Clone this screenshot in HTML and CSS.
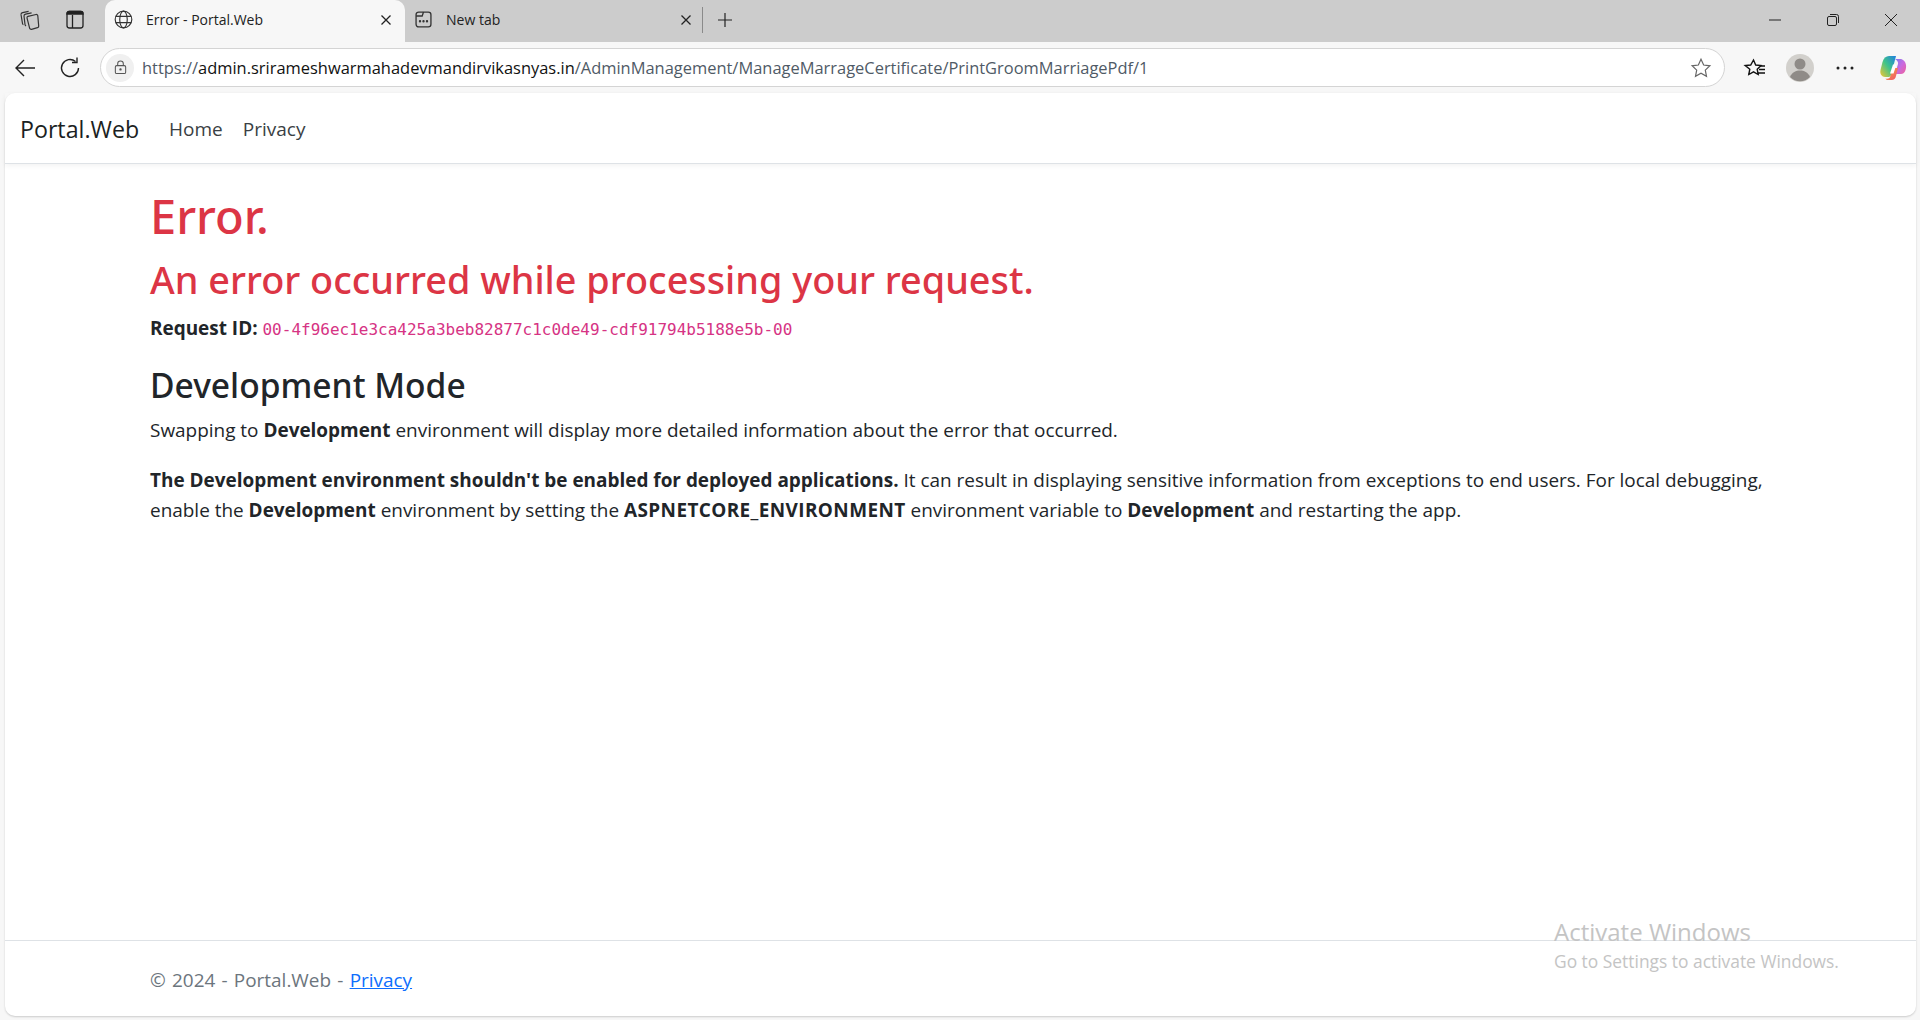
FILE: index.html
```html
<!DOCTYPE html>
<html lang="en">
<head>
<meta charset="utf-8">
<title>Error - Portal.Web</title>
<link rel="stylesheet" href="styles.css">
</head>
<body>
<div class="tabbar">
  <div class="tab-tools">
    <svg class="ic" viewBox="0 0 24 24" fill="none" stroke="#333" stroke-width="1.2"><path d="M3 6.5c0-1 .7-1.7 1.6-1.9l6-1.2M6 8c0-1 .7-1.7 1.6-1.9l6-1.2"/><path d="M3 6.5l1.5 9c.1.6.4 1 .9 1.2M6 8l1 8.5c.1.7.5 1.2 1.1 1.4"/><path d="M10 8.3l8-1.8c.9-.2 1.700.4 1.800 1.300l.9 10.200c.1.800-.4 1.500-1.200 1.700l-6 1.600c-.9.2-1.700-.3-1.900-1.200L9 10c-.1-.8.3-1.500 1-1.700z"/></svg>
    <svg class="ic" viewBox="0 0 24 24" fill="none" stroke="#222" stroke-width="1.3"><rect x="4" y="3.500" width="16" height="16.500" rx="2.500"/><path d="M4 6h16V5.500a2 2 0 0 0-2-2H6a2 2 0 0 0-2 2z" fill="#222"/><path d="M9.500 7v13"/></svg>
  </div>
  <div class="tab tab-active">
    <svg class="fav" viewBox="0 0 24 24" fill="none" stroke="#333" stroke-width="1.300"><circle cx="12" cy="12" r="9.500"/><ellipse cx="12" cy="12" rx="4.300" ry="9.500"/><path d="M3.200 8.500h17.600M3.200 15.500h17.600"/></svg>
    <span class="tab-title">Error - Portal.Web</span>
    <svg class="close" viewBox="0 0 12 12" fill="none" stroke="#222" stroke-width="1.300"><path d="M1.500 1.500l9 9M10.500 1.500l-9 9"/></svg>
  </div>
  <div class="tab">
    <svg class="fav" viewBox="0 0 24 24" fill="none" stroke="#333" stroke-width="1.500"><rect x="3.500" y="3.500" width="17" height="17" rx="3"/><path d="M3.500 8h7l1.500-4.500"/><circle cx="8" cy="14" r=".6" fill="#333"/><circle cx="12" cy="14" r=".6" fill="#333"/><circle cx="16" cy="14" r=".6" fill="#333"/></svg>
    <span class="tab-title">New tab</span>
    <svg class="close" viewBox="0 0 12 12" fill="none" stroke="#222" stroke-width="1.300"><path d="M1.500 1.500l9 9M10.500 1.500l-9 9"/></svg>
  </div>
  <span class="tab-sep"></span>
  <svg class="plus" viewBox="0 0 16 16" fill="none" stroke="#222" stroke-width="1.200"><path d="M8 1v14M1 8h14"/></svg>
  <div class="window-controls">
    <svg class="win" viewBox="0 0 14 14" fill="none" stroke="#222" stroke-width="1"><path d="M1 7h12"/></svg>
    <svg class="win" viewBox="0 0 14 14" fill="none" stroke="#222" stroke-width="1"><rect x="1.500" y="3.500" width="9" height="9" rx="1.500"/><path d="M4 1.500h6.500a2 2 0 0 1 2 2V10"/></svg>
    <svg class="win" viewBox="0 0 14 14" fill="none" stroke="#222" stroke-width="1"><path d="M1 1l12 12M13 1L1 13"/></svg>
  </div>
</div>
<div class="toolbar">
  <svg class="nav-ic" viewBox="0 0 24 24" fill="none" stroke="#222" stroke-width="1.400"><path d="M22 12H3M11 4l-8 8 8 8"/></svg>
  <svg class="nav-ic" viewBox="0 0 24 24" fill="none" stroke="#222" stroke-width="1.400"><path d="M20.500 12a8.500 8.500 0 1 1-3-6.500"/><path d="M19 1.500v5h-5"/></svg>
  <div class="addr">
    <span class="lock"><svg viewBox="0 0 16 16" fill="none" stroke="#555" stroke-width="1.100"><rect x="2.500" y="6" width="11" height="8.500" rx="1.500"/><path d="M5 6V4a3 3 0 0 1 6 0v2"/><circle cx="8" cy="10" r=".7" fill="#555"/></svg></span>
    <span class="url"><span class="url-dim">https://</span>admin.srirameshwarmahadevmandirvikasnyas.in<span class="url-dim">/AdminManagement/ManageMarrageCertificate/PrintGroomMarriagePdf/1</span></span>
    <svg class="star" viewBox="0 0 24 24" fill="none" stroke="#666" stroke-width="1.300"><path d="M12 2.500l2.900 6.300 6.800.8-5 4.700 1.300 6.800-6-3.400-6 3.400 1.300-6.800-5-4.700 6.800-.8z"/></svg>
  </div>
  <div class="tools">
    <svg class="tool" viewBox="0 0 24 24" fill="none" stroke="#111" stroke-width="1.400"><path d="M9.500 3l2.200 5 5.300.6-3.800 3.600 1 5.300-4.700-2.700-4.700 2.700 1-5.300L1.200 8.600 6.700 8z" transform="translate(1 1)"/><path d="M17 10h5M16 13.500h6M15 17h7"/></svg>
    <svg class="avatar" viewBox="0 0 28 28"><circle cx="14" cy="14" r="14" fill="#d2d0cc"/><circle cx="14" cy="10" r="5.500" fill="#8f8b87"/><path d="M4 23c2-5 6-6.500 10-6.500S22 18 24 23a14 14 0 0 1-20 0z" fill="#8f8b87"/></svg>
    <svg class="tool dots" viewBox="0 0 24 24" fill="#222"><circle cx="5" cy="12" r="1.500"/><circle cx="12" cy="12" r="1.500"/><circle cx="19" cy="12" r="1.500"/></svg>
    <svg class="copilot" viewBox="0 0 28 28" fill="none">
      <defs>
        <linearGradient id="cpa" x1="0" y1="1" x2="1" y2="0"><stop offset="0" stop-color="#f5c530"/><stop offset=".5" stop-color="#3fc48a"/><stop offset="1" stop-color="#1f7fe0"/></linearGradient>
        <linearGradient id="cpb" x1="0" y1="0" x2="1" y2="1"><stop offset="0" stop-color="#7c7cf0"/><stop offset=".5" stop-color="#c86be0"/><stop offset="1" stop-color="#f0609a"/></linearGradient>
        <linearGradient id="cpc" x1="0" y1="0" x2="1" y2="1"><stop offset="0" stop-color="#f5b040"/><stop offset="1" stop-color="#f0506a"/></linearGradient>
      </defs>
      <path d="M10 2h7l-5 19c-.4 1.500-1.500 2-3 2H6c-3 0-5.500-3-4.500-7l2-8C4.500 4 7 2 10 2z" fill="url(#cpa)"/>
      <path d="M16 5h5c3 0 5.500 2.500 6 6 .5 4-1 9-5 9h-6l3-10c.3-1 .2-3-3-5z" fill="url(#cpb)"/>
      <path d="M11 23l3-9h5l-2 8c-.5 2.500-2 4-4.500 4H9c-1 0-2-.5-2.500-1.500C9 25 10.500 24.500 11 23z" fill="url(#cpc)"/>
      <path d="M14 10.500h3.500l-3 9H11z" fill="#fff"/>
    </svg>
  </div>
</div>
<div class="page">
  <header class="navbar">
    <a class="brand">Portal.Web</a>
    <nav class="nav"><a>Home</a><a>Privacy</a></nav>
  </header>
  <main class="container">
    <h1 class="danger">Error.</h1>
    <h2 class="danger">An error occurred while processing your request.</h2>
    <p class="req"><strong>Request ID:</strong> <code>00-4f96ec1e3ca425a3beb82877c1c0de49-cdf91794b5188e5b-00</code></p>
    <h3>Development Mode</h3>
    <p>Swapping to <strong>Development</strong> environment will display more detailed information about the error that occurred.</p>
    <p><strong>The Development environment shouldn't be enabled for deployed applications.</strong> It can result in displaying sensitive information from exceptions to end users. For local debugging, enable the <strong>Development</strong> environment by setting the <strong class="caps">ASPNETCORE_ENVIRONMENT</strong> environment variable to <strong>Development</strong> and restarting the app.</p>
  </main>
  <footer class="footer">© 2024 - Portal.Web - <a href="#">Privacy</a></footer>
  <div class="activate">
    <div class="act-1">Activate Windows</div>
    <div class="act-2">Go to Settings to activate Windows.</div>
  </div>
</div>
</body>
</html>
```
FILE: styles.css
```css
* { box-sizing: border-box; }
html, body { height: 100%; }
body {
  margin: 0;
  height: 1020px;
  overflow: hidden;
  display: flex;
  flex-direction: column;
  background: #f7f7f7;
  font-family: "Open Sans", "Noto Sans", sans-serif;
  color: #212529;
}
.tabbar {
  height: 42px;
  flex: none;
  background: #cccccc;
  display: flex;
  align-items: center;
  padding-left: 18px;
}
.tab-tools { display: flex; gap: 21px; width: 87px; flex: none; }
.tab-tools, .tab-sep, .plus, .window-controls { margin-bottom: 2px; }
.ic { width: 24px; height: 24px; }
.tab {
  width: 300px;
  height: 42px;
  flex: none;
  display: flex;
  align-items: center;
  padding: 0 10px 3px 8px;
  font-size: 14px;
  color: #222;
}
.tab-active {
  background: #f7f7f7;
  border-radius: 10px 10px 0 0;
}
.fav { width: 21px; height: 21px; flex: none; }
.tab-title { flex: 1; margin-left: 12px; }
.close { width: 12px; height: 12px; flex: none; margin-right: 3px; }
.tab-sep { width: 1px; height: 26px; background: #8a8a8a; margin-left: -3px; flex: none; }
.plus { width: 16px; height: 16px; margin-left: 14px; flex: none; }
.window-controls { margin-left: auto; display: flex; gap: 44px; padding-right: 22px; }
.win { width: 14px; height: 14px; }
.toolbar {
  height: 51px;
  flex: none;
  display: flex;
  align-items: center;
  padding: 0 10px 0 13px;
}
.nav-ic { width: 24px; height: 24px; flex: none; margin-right: 21px; }
.addr {
  width: 1625px;
  margin-left: -3px;
  height: 39px;
  flex: none;
  display: flex;
  align-items: center;
  background: #fff;
  border: 1px solid #d4d4d4;
  border-radius: 20px;
  padding: 0 12px 0 5px;
}
.lock {
  width: 28px;
  height: 28px;
  border-radius: 50%;
  background: #f0f0f0;
  display: flex;
  align-items: center;
  justify-content: center;
  flex: none;
}
.lock svg { width: 15px; height: 15px; }
.url {
  flex: 1;
  margin-left: 8px;
  font-size: 16.45px;
  color: #111;
  white-space: nowrap;
  overflow: hidden;
}
.url-dim { color: #4f5a66; }
.star { width: 22px; height: 22px; flex: none; }
.tools { display: flex; align-items: center; margin-left: 18px; gap: 19px; flex: none; }
.tool { width: 24px; height: 24px; }
.avatar { width: 28px; height: 28px; }
.copilot { width: 28px; height: 28px; margin-left: 3px; }
.page {
  flex: 1;
  margin: 0 4px 4px 5px;
  background: #fff;
  border-radius: 10px;
  box-shadow: 0 1px 2px rgba(0,0,0,.18);
  display: flex;
  flex-direction: column;
  position: relative;
  min-height: 0;
}
.navbar {
  height: 71px;
  flex: none;
  border-bottom: 1px solid #dee2e6;
  box-shadow: 0 2px 5px rgba(0,0,0,.05);
  display: flex;
  align-items: center;
  padding: 2px 0 0 15px;
}
.brand { font-size: 23.2px; color: #1c1f23; margin-right: 30px; }
.nav { display: flex; gap: 20px; font-size: 19px; color: #3a3f44; }
.container { flex: 1; padding: 24px 145px 0; font-size: 18.95px; line-height: 30px; }
h1, h2, h3 { margin: 0; font-family: "Noto Sans", sans-serif; font-weight: 500; line-height: 1.2; }
h1 { font-size: 47px; margin-bottom: 13px; }
h2 { font-size: 37.8px; margin-bottom: 10px; }
h3 { font-size: 33.6px; margin-bottom: 10px; }
.danger { color: #dc3545; }
p { margin: 0 0 20px; }
.req { margin-bottom: 20px; }
strong { font-weight: 700; }
.caps { letter-spacing: .4px; }
code { font-family: "DejaVu Sans Mono", monospace; font-size: 16px; color: #d63384; }
.footer {
  height: 76px;
  flex: none;
  border-top: 1px solid #dee2e6;
  padding: 24px 145px 0;
  font-size: 18.95px;
  line-height: 30px;
  word-spacing: 1.3px;
  color: #6c757d;
}
.footer a { color: #0d6efd; }
.activate {
  position: absolute;
  left: 1549px;
  top: 822px;
  color: #c4c4c4;
  pointer-events: none;
}
.act-1 { font-size: 24px; line-height: 34px; }
.act-2 { font-size: 17.4px; line-height: 24px; }
```
